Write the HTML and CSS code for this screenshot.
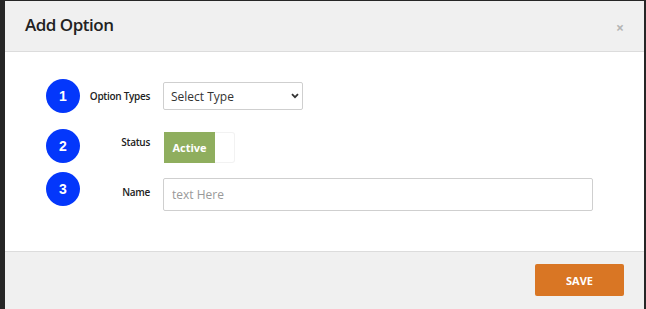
FILE: index.html
```html
<!DOCTYPE html>
<html>
  <head>
    <title>Add Option</title>
    <link rel="stylesheet" href="styles.css">
  </head>
  <body>
    <div class="modal">
      <div class="modal-header">
        <h4 class="modal-title">Add Option</h4>
        <span class="close">&times;</span>
      </div>
      <div class="modal-body">
        <div class="step step-1">
          <span class="step-num">1</span>
          <label class="step-label">Option Types</label>
          <div class="select-wrap">
            <select class="form-control">
              <option>Select Type</option>
            </select>
            <svg class="chevron" width="8" height="6" viewBox="0 0 8 6">
              <path d="M1 1.2 L4 4.2 L7 1.2" fill="none" stroke="#333" stroke-width="1.8"/>
            </svg>
          </div>
        </div>
        <div class="step step-2">
          <span class="step-num">2</span>
          <label class="step-label">Status</label>
          <div class="toggle">
            <span class="toggle-on">Active</span>
            <span class="toggle-off"></span>
          </div>
        </div>
        <div class="step step-3">
          <span class="step-num">3</span>
          <label class="step-label">Name</label>
          <input type="text" class="form-control name-input" placeholder="text Here">
        </div>
      </div>
      <div class="modal-footer">
        <button class="btn-save">SAVE</button>
      </div>
    </div>
  </body>
</html>
```

FILE: styles.css
```css
body {
  margin: 0;
  background: #262626;
  font-family: "Open Sans", "Liberation Sans", sans-serif;
  overflow: hidden;
}

.modal {
  display: flex;
  flex-direction: column;
  margin: 1px 2px 0 5px;
  width: 639px;
  height: 308px;
  background: #fff;
}

.modal-header {
  display: flex;
  align-items: center;
  justify-content: space-between;
  height: 50px;
  padding: 0 20px 0 20px;
  background: #f0f0f0;
  border-bottom: 1px solid #dcdcdc;
}

.modal-title {
  margin: 0 0 3px 0;
  font-size: 17px;
  font-weight: 600;
  letter-spacing: -0.5px;
  color: #222;
}

.close {
  color: #b5b5b5;
  font-size: 14px;
  font-weight: 700;
  margin-top: 2px;
}

.modal-body {
  padding: 27px 0 0 41px;
  height: 172px;
}

.step {
  display: flex;
  align-items: flex-start;
}

.step-1 {
  margin-bottom: 16px;
}

.step-2 {
  margin-bottom: 9px;
}

.step-num {
  display: flex;
  align-items: center;
  justify-content: center;
  width: 34px;
  height: 34px;
  border-radius: 50%;
  background: #0437fb;
  color: #fff;
  font-family: "Liberation Sans", sans-serif;
  font-weight: 700;
  font-size: 14px;
}

.step-label {
  width: 70px;
  text-align: right;
  margin-right: 13px;
  font-size: 10px;
  font-weight: 600;
  letter-spacing: -0.3px;
  color: #222;
  line-height: 14px;
}

.step-1 .step-label {
  margin-top: 10px;
}

.step-2 .step-label {
  margin-top: 6px;
}

.step-3 .step-label {
  margin-top: 13px;
}

.form-control {
  box-sizing: border-box;
  border: 1px solid #cfcfcf;
  border-radius: 2px;
  background: #fff;
  font-family: "Open Sans", sans-serif;
  font-size: 12px;
  color: #333;
  outline: none;
}

.select-wrap {
  position: relative;
  margin-top: 3px;
}

.select-wrap select {
  appearance: none;
  width: 140px;
  height: 28px;
  padding: 0 0 0 7px;
}

.chevron {
  position: absolute;
  right: 4px;
  top: 11px;
  pointer-events: none;
}

.toggle {
  display: flex;
  margin-top: 3px;
  margin-left: 1px;
  height: 31px;
}

.toggle-on {
  display: flex;
  align-items: center;
  justify-content: center;
  width: 51px;
  background: #8fae5e;
  color: #fff;
  font-size: 11px;
  font-weight: 700;
}

.toggle-off {
  width: 19px;
  border: 1px solid #f2f2f2;
  border-left: none;
  border-radius: 0 3px 3px 0;
}

.name-input {
  margin-top: 6px;
  width: 430px;
  height: 33px;
  padding: 0 8px;
}

.name-input::placeholder {
  color: #999;
}

.modal-footer {
  flex: 1;
  display: flex;
  justify-content: flex-end;
  align-items: flex-start;
  padding: 12px 20px 0;
  background: #f0f0f0;
  border-top: 1px solid #dcdcdc;
}

.btn-save {
  width: 89px;
  height: 32px;
  border: none;
  border-radius: 2px;
  background: #d97624;
  color: #fff;
  font-family: "Open Sans", sans-serif;
  font-size: 11px;
  font-weight: 700;
}
```
